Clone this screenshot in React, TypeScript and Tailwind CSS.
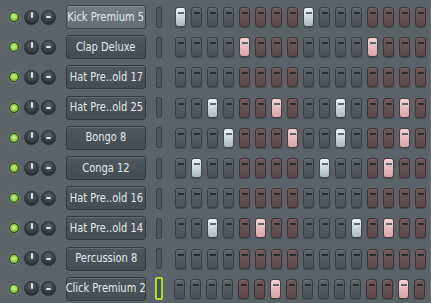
import React from 'react'

interface Channel {
  name: string
  steps: number[]
  selected?: boolean
  focused?: boolean
}

const channels: Channel[] = [
  { name: 'Kick Premium 5', steps: [1, 9], selected: true },
  { name: 'Clap Deluxe', steps: [5, 13] },
  { name: 'Hat Pre..old 17', steps: [] },
  { name: 'Hat Pre..old 25', steps: [3, 7, 11, 15] },
  { name: 'Bongo 8', steps: [4, 8, 11, 15] },
  { name: 'Conga 12', steps: [2, 10, 14] },
  { name: 'Hat Pre..old 16', steps: [] },
  { name: 'Hat Pre..old 14', steps: [3, 6, 12, 14] },
  { name: 'Percussion 8', steps: [] },
  { name: 'Click Premium 2', steps: [7, 15], focused: true },
]

const Step = ({ on, red }: { on: boolean; red: boolean }): JSX.Element => {
  let cls = 'bg-[linear-gradient(#5c6368,#4b5156)] border-[#393e42]'
  if (red && !on) cls = 'bg-[linear-gradient(#6e585a,#5c484a)] border-[#3d3335]'
  if (!red && on) cls = 'bg-[linear-gradient(#eef3f5,#aab8c1)] border-[#40484d]'
  if (red && on) cls = 'bg-[linear-gradient(#f6d3d6,#d6a1a6)] border-[#4a3c3e]'
  return (
    <div className={`w-[11px] h-[20px] rounded-[3px] border flex justify-center shadow-[0_1px_1px_rgba(0,0,0,0.25),inset_0_1px_0_rgba(255,255,255,0.08)] ${cls}`}>
      <div className={`mt-[4px] w-[6px] h-[2px] ${on ? 'bg-[#5a646d]' : 'bg-[#2a2e31]'}`} />
    </div>
  )
}

const Row = ({ ch }: { ch: Channel }): JSX.Element => {
  return (
    <div className="h-[30.2px] flex items-center">
      <div className="w-[10px] h-[10px] ml-[9px] rounded-full border border-[#33402a] bg-[radial-gradient(circle_at_50%_45%,#d4f59a,#8ccc3c_55%,#5c8e2a)] shadow-[0_0_3px_rgba(150,220,80,0.5)]" />
      <div className="ml-[5px] w-[15px] h-[15px] rounded-full bg-[radial-gradient(circle_at_50%_30%,#5b6368,#2b2f33_75%)] border border-[#2a2e31] flex justify-center">
        <div className="w-[2px] h-[6px] mt-[1px] bg-[#dfe3e5] rounded-[1px]" />
      </div>
      <div className="ml-[2px] w-[15px] h-[15px] rounded-full bg-[radial-gradient(circle_at_50%_30%,#5b6368,#2b2f33_75%)] border border-[#2a2e31] flex items-center justify-center">
        <div className="w-[5px] h-[2px] bg-[#dfe3e5] rounded-[1px]" />
      </div>
      <div
        className={`ml-[10px] w-[80px] h-[24px] rounded-[3px] border flex items-center justify-center whitespace-nowrap shadow-[inset_0_1px_0_rgba(255,255,255,0.12)] ${
          ch.selected ? 'bg-[linear-gradient(#737b81,#656d73)] border-[#3c4247]' : 'bg-[linear-gradient(#50575c,#464d52)] border-[#33383c]'
        }`}
      >
        <span
          className="text-[12.5px] text-[#e6eaec] scale-x-[0.79] inline-block"
          style={{ fontFamily: '"DejaVu Sans", sans-serif' }}
        >
          {ch.name}
        </span>
      </div>
      <div
        className={`rounded-[2px] ${
          ch.focused
            ? 'ml-[9px] w-[8px] h-[23px] border-2 border-[#a9dc34] bg-[#4a5256]'
            : 'ml-[10px] w-[6px] h-[21px] border border-[#3a4044] bg-[#4f575c]'
        }`}
      />
      <div className={`flex gap-[5px] ${ch.focused ? 'ml-[11px]' : 'ml-[13px]'}`}>
        {Array.from({ length: 16 }, (_, i) => (
          <Step key={i} on={ch.steps.includes(i + 1)} red={Math.floor(i / 4) % 2 === 1} />
        ))}
      </div>
    </div>
  )
}

const App = (): JSX.Element => {
  return (
    <div className="w-[431px] h-[303px] bg-[#5b6368] overflow-hidden pt-[2px] border-r border-[#6a7277]">
      {channels.map((ch) => (
        <Row key={ch.name} ch={ch} />
      ))}
    </div>
  )
}

export default App
